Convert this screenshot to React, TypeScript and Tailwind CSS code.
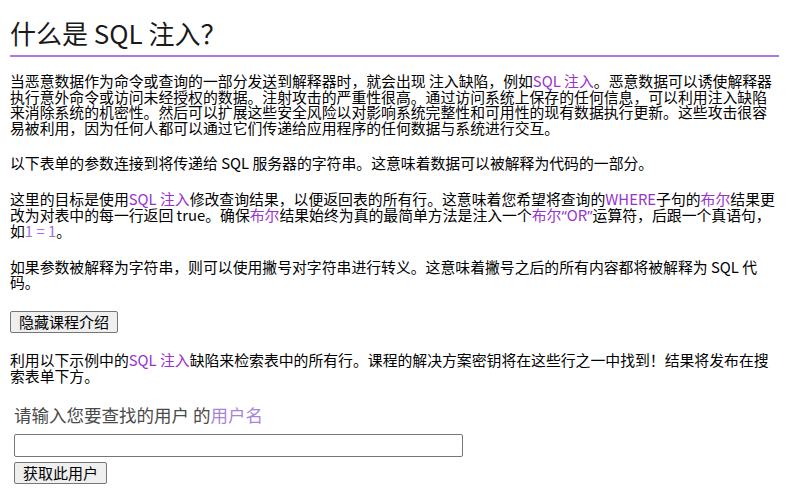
import React from 'react';

// 课程页：SQL 注入介绍 + 查询表单
const LINK = 'text-[#9932cc]';

function Lnk({ children }: { children: React.ReactNode }) {
  return <span className={LINK}>{children}</span>;
}

export default function App() {
  const [hidden, setHidden] = React.useState(false);
  const [name, setName] = React.useState('');

  return (
    <div className="min-h-screen bg-white px-[10px] font-['Noto_Sans_CJK_SC',sans-serif] text-black [text-spacing-trim:space-all]">
      <h1 className="border-b-2 border-[#a87ce0] pt-[18px] pb-[7px] text-[26px] leading-[30px] font-normal text-[#1a1a1a]">
        什么是 SQL 注入？
      </h1>

      {!hidden && (
        <div className="mt-[16px] space-y-[20px] text-[14.85px] leading-[15.6px]">
          <p>
            当恶意数据作为命令或查询的一部分发送到解释器时，就会出现 注入缺陷，例如<Lnk>SQL 注入</Lnk>。恶意数据可以诱使解释器执行意外命令或访问未经授权的数据。注射攻击的严重性很高。通过访问系统上保存的任何信息，可以利用注入缺陷来消除系统的机密性。然后可以扩展这些安全风险以对影响系统完整性和可用性的现有数据执行更新。这些攻击很容易被利用，因为任何人都可以通过它们传递给应用程序的任何数据与系统进行交互。
          </p>
          <p>以下表单的参数连接到将传递给 SQL 服务器的字符串。这意味着数据可以被解释为代码的一部分。</p>
          <p>
            这里的目标是使用<Lnk>SQL 注入</Lnk>修改查询结果，以便返回表的所有行。这意味着您希望将查询的<Lnk>WHERE</Lnk>子句的<Lnk>布尔</Lnk>结果更改为对表中的每一行返回 true。确保<Lnk>布尔</Lnk>结果始终为真的最简单方法是注入一个
            <Lnk>
              布尔<span className="font-['Noto_Sans',sans-serif]">“</span>OR<span className="font-['Noto_Sans',sans-serif]">”</span>
            </Lnk>
            运算符，后跟一个真语句，如<span className="text-[#a070e0]">1 = 1</span>。
          </p>
          <p>如果参数被解释为字符串，则可以使用撇号对字符串进行转义。这意味着撇号之后的所有内容都将被解释为 SQL 代码。</p>
        </div>
      )}

      <button
        type="button"
        onClick={() => setHidden(!hidden)}
        className="mt-[21px] block h-[22px] rounded-[2px] border border-[#767676] bg-[#efefef] px-[8px] text-[15px] leading-[18px] text-black"
      >
        {hidden ? '显示课程介绍' : '隐藏课程介绍'}
      </button>

      <p className="mt-[19px] text-[14.85px] leading-[15.6px]">
        利用以下示例中的<Lnk>SQL 注入</Lnk>缺陷来检索表中的所有行。课程的解决方案密钥将在这些行之一中找到！结果将发布在搜索表单下方。
      </p>

      <form className="mt-[22px] px-[4px]" onSubmit={(e) => e.preventDefault()}>
        <label className="block text-[17.5px] leading-[20px] text-[#4a4a4a]">
          请输入您要查找的用户 的<span className="text-[#a884d8]">用户名</span>
        </label>
        <input
          value={name}
          onChange={(e) => setName(e.target.value)}
          className="mt-[9px] block h-[23px] w-[449px] rounded-[2px] border border-[#767676] bg-white px-[2px] text-[15px] outline-none"
        />
        <button
          type="submit"
          className="mt-[5px] block h-[22px] rounded-[2px] border border-[#767676] bg-[#efefef] px-[8px] text-[15px] leading-[18px] text-black"
        >
          获取此用户
        </button>
      </form>
    </div>
  );
}
